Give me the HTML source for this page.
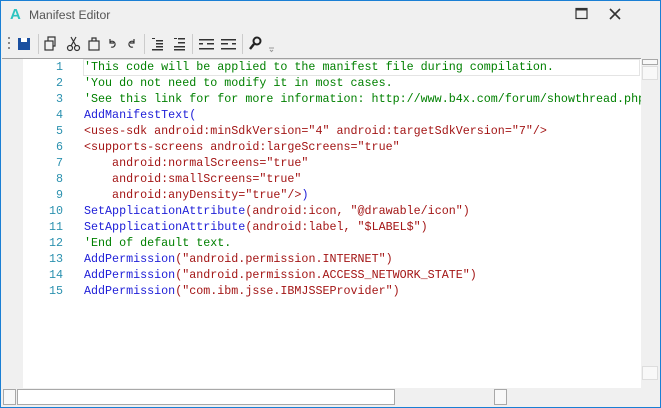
<!DOCTYPE html>
<html><head><style>
*{margin:0;padding:0;box-sizing:border-box}
body{width:661px;height:408px;overflow:hidden;background:#f0f0f0;font-family:"Liberation Sans",sans-serif}
.win{position:absolute;left:0;top:0;width:661px;height:408px;border:1px solid #1a7fd4;background:#f0f0f0}
.title{position:absolute;left:28px;top:7px;font-size:12.2px;color:#555}
.logo{position:absolute;left:9px;top:5px;font-size:15px;font-weight:bold;color:#2cc4c0}
.ed{position:absolute;left:1px;top:57px;width:639px;height:330px;background:#fff;border-top:1px solid #a0a0a0}
.gut{position:absolute;left:0;top:0;width:21px;height:330px;background:#f0f0f0}
.code{position:absolute;left:0;top:0;font-family:"Liberation Mono",monospace;font-size:11.7px;line-height:16px}
.ln{position:absolute;left:21px;width:40px;text-align:right;color:#2b91af}
.tx{position:absolute;left:82px;white-space:pre}
.c{color:#008000}.k{color:#2020d8}.r{color:#a31515}
.vs{position:absolute;left:640px;top:57px;width:19px;height:330px;background:#f0f0f0}
.hs{position:absolute;left:1px;top:387px;width:658px;height:19px;background:#f0f0f0}
.box{position:absolute;border:1px solid #a8a8a8;background:#f8f8f8}
</style></head><body>
<div class="win">
<div class="logo">A</div>
<div class="title">Manifest Editor</div>
<svg style="position:absolute;left:574px;top:6px" width="14" height="14"><rect x="1" y="1.5" width="11" height="10" fill="none" stroke="#333" stroke-width="1.2"/><rect x="1" y="1" width="11" height="2.5" fill="#333"/></svg>
<svg style="position:absolute;left:608px;top:7px" width="12" height="12"><path d="M1 1L11 11M11 1L1 11" stroke="#333" stroke-width="1.6"/></svg>
<svg style="position:absolute;left:0;top:30px" width="300" height="26">
<g fill="#888"><rect x="7" y="6" width="2" height="2"/><rect x="7" y="11" width="2" height="2"/><rect x="7" y="16" width="2" height="2"/></g>
<rect x="17" y="7" width="12" height="12" fill="#1a4fa0"/><rect x="20" y="7" width="6" height="4" fill="#fff"/>
<rect x="37" y="3" width="1" height="20" fill="#ccc"/>
<g fill="none" stroke="#333" stroke-width="1.2"><rect x="44" y="10" width="8" height="9"/><path d="M47 10V6h7v9h-2"/>
<circle cx="69" cy="17" r="2.5"/><circle cx="76" cy="17" r="2.5"/><path d="M70 15L75 6M75 15L70 6"/>
<rect x="88" y="10" width="10" height="9"/><path d="M91 10V7h4v3"/>
<path d="M109 11a3 3 0 1 1 1 5M109 8v4h4"/><path d="M133 11a3 3 0 1 0-1 5M133 8v4h-4"/></g>
<rect x="143" y="3" width="1" height="20" fill="#ccc"/>
<g fill="#333"><rect x="151" y="7" width="3" height="1"/><rect x="155" y="9" width="7" height="1.5"/><rect x="155" y="12" width="7" height="1.5"/><rect x="155" y="15" width="7" height="1.5"/><rect x="151" y="18" width="11" height="1.5"/>
<rect x="173" y="7" width="3" height="1"/><rect x="177" y="7" width="7" height="1.5"/><rect x="177" y="11" width="7" height="1.5"/><rect x="173" y="15" width="11" height="1.5"/><rect x="173" y="18" width="11" height="1.5"/></g>
<rect x="191" y="3" width="1" height="20" fill="#ccc"/>
<g fill="#333"><rect x="198" y="8" width="15" height="1.5"/><rect x="198" y="12" width="4" height="1.5"/><rect x="206" y="12" width="7" height="1.5"/><rect x="198" y="17" width="15" height="1.5"/>
<rect x="220" y="8" width="15" height="1.5"/><rect x="220" y="12" width="7" height="1.5"/><rect x="231" y="12" width="4" height="1.5"/><rect x="220" y="17" width="15" height="1.5"/></g>
<rect x="241" y="3" width="1" height="20" fill="#ccc"/>
<circle cx="256" cy="10" r="3.5" fill="none" stroke="#222" stroke-width="2"/><path d="M253 13l-4 5" stroke="#222" stroke-width="2.5"/>
<path d="M268 17h5M269 19l1.5 1.5 1.5-1.5" stroke="#999" fill="none"/>
</svg>
<div class="ed">
<div class="gut"></div>
<div style="position:absolute;left:81px;top:0;width:557px;height:17px;border:1px solid #e4e4e4"></div>
<div class="code">
<div class="ln" style="top:0">1</div><div class="ln" style="top:16px">2</div><div class="ln" style="top:32px">3</div><div class="ln" style="top:48px">4</div><div class="ln" style="top:64px">5</div><div class="ln" style="top:80px">6</div><div class="ln" style="top:96px">7</div><div class="ln" style="top:112px">8</div><div class="ln" style="top:128px">9</div><div class="ln" style="top:144px">10</div><div class="ln" style="top:160px">11</div><div class="ln" style="top:176px">12</div><div class="ln" style="top:192px">13</div><div class="ln" style="top:208px">14</div><div class="ln" style="top:224px">15</div>
<div class="tx" style="top:0"><span class="c">'This code will be applied to the manifest file during compilation.</span>
<span class="c">'You do not need to modify it in most cases.</span>
<span class="c">'See this link for for more information: http://www.b4x.com/forum/showthread.php</span>
<span class="k">AddManifestText(</span>
<span class="r">&lt;uses-sdk android:minSdkVersion="4" android:targetSdkVersion="7"/&gt;</span>
<span class="r">&lt;supports-screens android:largeScreens="true"</span>
<span class="r">    android:normalScreens="true"</span>
<span class="r">    android:smallScreens="true"</span>
<span class="r">    android:anyDensity="true"/&gt;</span><span class="k">)</span>
<span class="k">SetApplicationAttribute</span><span class="r">(android:icon, "@drawable/icon")</span>
<span class="k">SetApplicationAttribute</span><span class="r">(android:label, "$LABEL$")</span>
<span class="c">'End of default text.</span>
<span class="k">AddPermission</span><span class="r">("android.permission.INTERNET")</span>
<span class="k">AddPermission</span><span class="r">("android.permission.ACCESS_NETWORK_STATE")</span>
<span class="k">AddPermission</span><span class="r">("com.ibm.jsse.IBMJSSEProvider")</span></div>
</div>
</div>
<div class="vs">
<div class="box" style="left:1px;top:1px;width:16px;height:6px"></div>
<div class="box" style="left:1px;top:8px;width:16px;height:14px;border-color:#ddd"></div>
<div class="box" style="left:1px;top:308px;width:16px;height:14px;border-color:#ddd"></div>
</div>
<div class="hs">
<div class="box" style="left:1px;top:1px;width:13px;height:16px"></div>
<div class="box" style="left:15px;top:1px;width:378px;height:16px;background:#fff"></div>
<div class="box" style="left:492px;top:1px;width:13px;height:16px"></div>
</div>
</div>
</body></html>
